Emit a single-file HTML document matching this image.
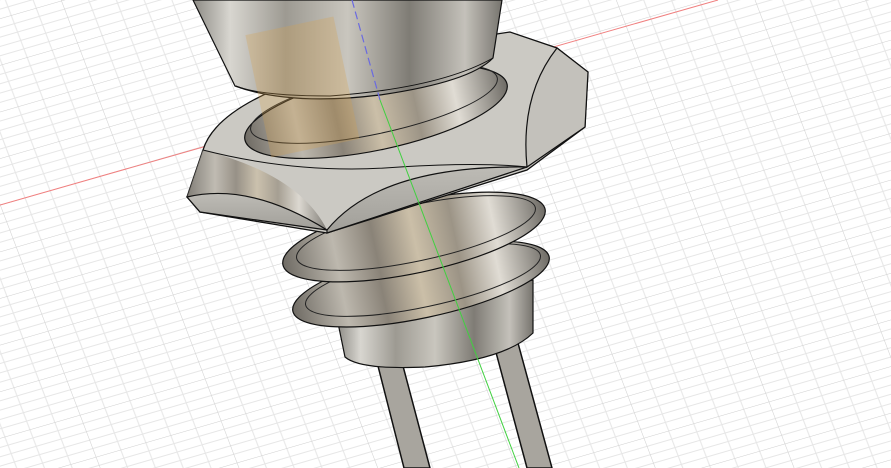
<!DOCTYPE html>
<html><head><style>html,body{margin:0;padding:0;background:#fff;overflow:hidden}svg{display:block}</style></head>
<body>
<svg width="891" height="468" viewBox="0 0 891 468" xmlns="http://www.w3.org/2000/svg">
<defs>
<pattern id="g" width="125" height="42" patternUnits="userSpaceOnUse" patternTransform="matrix(1,-0.29,0.38,1,0,205)">
<g stroke="#e6e6e6" stroke-width="1" fill="none">
<path d="M25 0V42M50 0V42M75 0V42M100 0V42M0 8.4H125M0 16.8H125M0 25.2H125M0 33.6H125"/>
</g>
<g stroke="#cfcfcf" stroke-width="1" fill="none"><path d="M0 0V42M0 0H125"/></g>
</pattern>
<linearGradient id="m" x1="0" x2="1" y1="0" y2="0">
<stop offset="0" stop-color="#8c8a84"/><stop offset=".12" stop-color="#d8d6d0"/><stop offset=".3" stop-color="#9d9a92"/><stop offset=".5" stop-color="#c9c6be"/><stop offset=".7" stop-color="#7f7c75"/><stop offset=".88" stop-color="#c4c1ba"/><stop offset="1" stop-color="#77746e"/>
</linearGradient>
<linearGradient id="t" x1="0" x2="1">
<stop offset="0" stop-color="#6f6b64"/><stop offset=".2" stop-color="#bdb8ae"/><stop offset=".35" stop-color="#8a8378"/><stop offset=".5" stop-color="#cbbfa8"/><stop offset=".65" stop-color="#9c9486"/><stop offset=".8" stop-color="#e0dcd4"/><stop offset="1" stop-color="#6e6b65"/>
</linearGradient>
<linearGradient id="f" x1="0" x2="0" y1="0" y2="1">
<stop offset="0" stop-color="#bdbbb5"/><stop offset="1" stop-color="#a19f99"/>
</linearGradient>
</defs>
<rect width="891" height="468" fill="#fff"/>
<rect width="891" height="468" fill="url(#g)"/>
<line x1="0" y1="205" x2="718" y2="0" stroke="#f08080" stroke-width="1"/>
<!-- pins -->
<path d="M378 366L403 366L430 468L404 468Z" fill="#a8a59e" stroke="#111" stroke-width="1.5"/>
<path d="M494 345L515 332L552 468L527 468Z" fill="#a8a59e" stroke="#111" stroke-width="1.5"/>
<!-- bottom cylinder -->
<path d="M337 318L533 280L533 333Q505 360 425 367Q360 370 345 357Z" fill="url(#m)" stroke="#111" stroke-width="1.2"/>
<!-- lower threads -->
<ellipse cx="421" cy="284" rx="131" ry="34" transform="rotate(-12 421 284)" fill="url(#t)" stroke="#111" stroke-width="1.2"/>
<ellipse cx="423" cy="280" rx="120" ry="27" transform="rotate(-12 423 280)" fill="none" stroke="#222" stroke-width="1"/>
<ellipse cx="414" cy="237" rx="134" ry="36" transform="rotate(-12 414 237)" fill="url(#t)" stroke="#111" stroke-width="1.2"/>
<ellipse cx="416" cy="233" rx="122" ry="28" transform="rotate(-12 416 233)" fill="none" stroke="#222" stroke-width="1"/>
<!-- hex nut -->
<path d="M203 150Q215 110 300 80Q420 45 510 32L557 48L588 72L585 127L527 170L327 233L200 212L187 197Z" fill="#cbc9c3" stroke="#111" stroke-width="1.3"/>
<path d="M203 150L187 197Q250 185 327 230Q300 175 203 150Z" fill="url(#t)" opacity=".8"/>
<path d="M187 197Q250 182 327 230L200 212Z" fill="url(#f)" stroke="#111" stroke-width="1.2"/>
<path d="M327 230Q380 165 527 167L327 233Z" fill="url(#f)" stroke="#111" stroke-width="1.2"/>
<path d="M527 167Q520 95 557 48L588 72L585 127Z" fill="#c3c1bb" stroke="#111" stroke-width="1.2"/>
<path d="M203 150Q300 175 400 167Q480 162 527 167" fill="none" stroke="#111" stroke-width="1"/>
<!-- upper threads -->
<ellipse cx="376" cy="112" rx="134" ry="38" transform="rotate(-12 376 112)" fill="url(#t)" stroke="#111" stroke-width="1.2"/>
<ellipse cx="374" cy="104" rx="126" ry="30" transform="rotate(-12 374 104)" fill="none" stroke="#222" stroke-width="1"/>
<!-- top cylinder -->
<path d="M193 0L502 0L493 58Q470 82 380 95Q290 106 235 86Z" fill="url(#m)" stroke="#111" stroke-width="1.2"/>
<path d="M236 86Q260 96 330 96Q440 88 493 58" fill="none" stroke="#111" stroke-width="1"/>
<rect x="258" y="25" width="90" height="125" fill="#d8a24a" opacity=".28" transform="rotate(-12 300 90)"/>
<!-- axes -->
<line x1="352" y1="0" x2="380" y2="100" stroke="#6a6ae0" stroke-width="1.2" stroke-dasharray="8 4"/>
<line x1="380" y1="100" x2="519" y2="468" stroke="#40d040" stroke-width="1"/>
</svg>
</body></html>
